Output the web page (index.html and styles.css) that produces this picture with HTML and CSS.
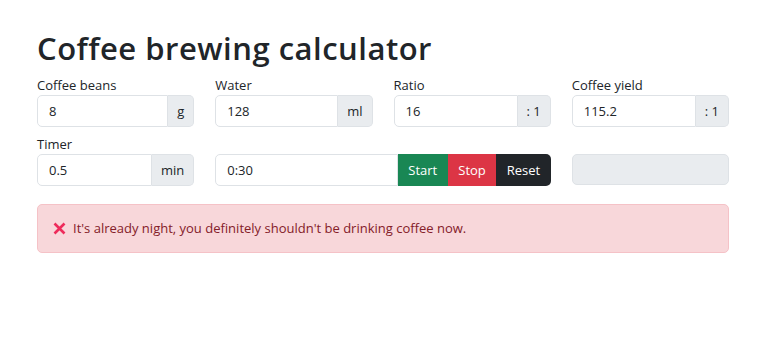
FILE: index.html
```html
<!DOCTYPE html>
<html lang="en">
<head>
    <meta charset="UTF-8">
    <meta name="viewport" content="width=device-width, initial-scale=1.0">
    <title>Coffee brewing calculator</title>
    <link rel="stylesheet" href="styles.css">
</head>
<body>
    <div class="container">
        <h1>Coffee brewing calculator</h1>
        <div class="calc-grid">
            <div class="field">
                <label for="beans">Coffee beans</label>
                <div class="input-group">
                    <input type="text" id="beans" value="8">
                    <span class="addon">g</span>
                </div>
            </div>
            <div class="field">
                <label for="water">Water</label>
                <div class="input-group">
                    <input type="text" id="water" value="128">
                    <span class="addon">ml</span>
                </div>
            </div>
            <div class="field">
                <label for="ratio">Ratio</label>
                <div class="input-group">
                    <input type="text" id="ratio" value="16">
                    <span class="addon">: 1</span>
                </div>
            </div>
            <div class="field">
                <label for="yield">Coffee yield</label>
                <div class="input-group">
                    <input type="text" id="yield" value="115.2">
                    <span class="addon">: 1</span>
                </div>
            </div>
            <div class="field">
                <label for="timer">Timer</label>
                <div class="input-group">
                    <input type="text" id="timer" value="0.5">
                    <span class="addon">min</span>
                </div>
            </div>
            <div class="field field-wide">
                <div class="input-group">
                    <input type="text" id="countdown" value="0:30">
                    <button class="btn btn-start">Start</button>
                    <button class="btn btn-stop">Stop</button>
                    <button class="btn btn-reset">Reset</button>
                </div>
            </div>
            <div class="field field-bottom">
                <div class="disabled-box"></div>
            </div>
        </div>
        <div class="alert">
            <svg class="alert-icon" width="13" height="13" viewBox="0 0 13 13">
                <path d="M1.5 1.5 L11.5 11.5 M11.5 1.5 L1.5 11.5" stroke="#ee2c5b" stroke-width="2.6" stroke-linecap="butt" fill="none"/>
            </svg>
            <span>It's already night, you definitely shouldn't be drinking coffee now.</span>
        </div>
    </div>
</body>
</html>
```

FILE: styles.css
```css
* {
    margin: 0;
    padding: 0;
    box-sizing: border-box;
}

body {
    font-family: "Open Sans", "Noto Sans", sans-serif;
    font-size: 13px;
    line-height: 21px;
    color: #212529;
    background: white;
}

.container {
    padding: 30px 37px 0 37px;
}

h1 {
    font-size: 31px;
    font-weight: 600;
    line-height: 1.2;
    letter-spacing: 0.5px;
    margin-bottom: 9px;
}

.calc-grid {
    display: grid;
    grid-template-columns: repeat(4, minmax(0, 1fr));
    column-gap: 21px;
    row-gap: 8px;
}

.field {
    display: flex;
    flex-direction: column;
    justify-content: flex-end;
    min-width: 0;
}

.field-wide {
    grid-column: span 2;
}

.field-bottom {
    padding-bottom: 1px;
}

label {
    display: block;
    line-height: 18px;
    margin-bottom: 1px;
}

.input-group {
    display: flex;
    height: 32px;
}

.input-group input {
    flex: 1;
    width: 0;
    min-width: 0;
    padding: 0 11px;
    font: inherit;
    color: #212529;
    border: 1px solid #dee2e6;
    border-radius: 5px 0 0 5px;
    outline: none;
}

.addon {
    display: flex;
    align-items: center;
    padding: 0 9px;
    background: #e9ecef;
    border: 1px solid #dee2e6;
    border-left: none;
    border-radius: 0 5px 5px 0;
}

.btn {
    font: inherit;
    color: white;
    border: none;
    padding: 0 10.5px;
    cursor: pointer;
}

.btn-start { background: #198754; }
.btn-stop { background: #dc3545; }

.btn-reset {
    background: #212529;
    border-radius: 0 5px 5px 0;
}

.disabled-box {
    height: 31px;
    background: #e9ecef;
    border: 1px solid #dee2e6;
    border-radius: 5px;
}

.alert {
    display: flex;
    align-items: center;
    gap: 7px;
    margin-top: 18px;
    padding: 13px 15px;
    background: #f8d7da;
    border: 1px solid #f5c2c7;
    border-radius: 5px;
    color: #842029;
}

.alert-icon {
    flex-shrink: 0;
}
```
